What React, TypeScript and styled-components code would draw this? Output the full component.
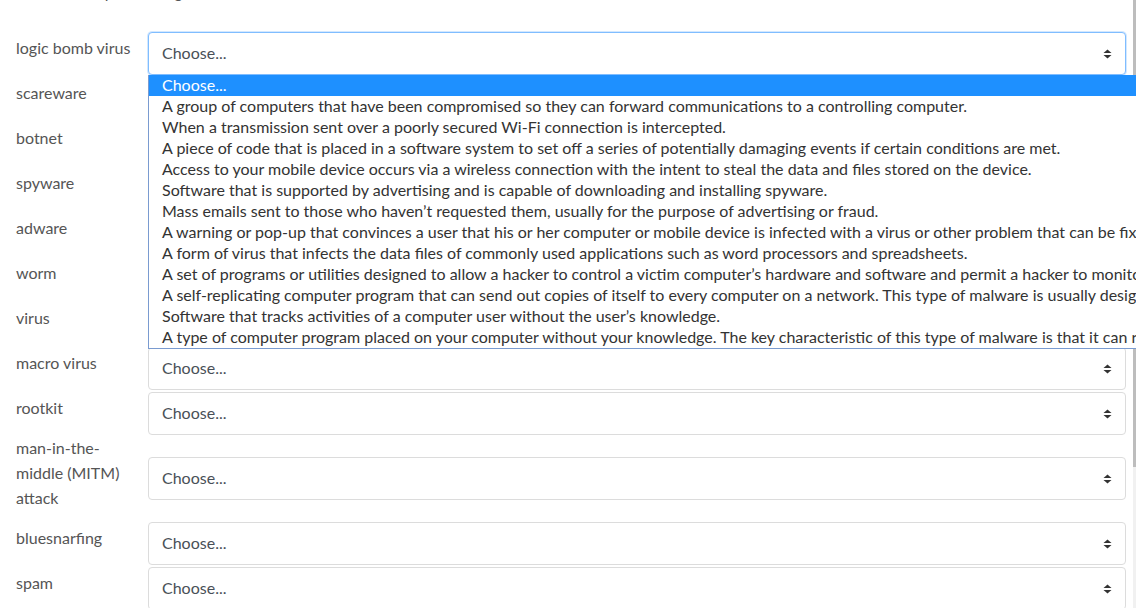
import React from "react";
import styled, { createGlobalStyle } from "styled-components";

const terms = [
  "logic bomb virus",
  "scareware",
  "botnet",
  "spyware",
  "adware",
  "worm",
  "virus",
  "macro virus",
  "rootkit",
  "man-in-the-middle (MITM) attack",
  "bluesnarfing",
  "spam",
];

const definitions = [
  "A group of computers that have been compromised so they can forward communications to a controlling computer.",
  "When a transmission sent over a poorly secured Wi-Fi connection is intercepted.",
  "A piece of code that is placed in a software system to set off a series of potentially damaging events if certain conditions are met.",
  "Access to your mobile device occurs via a wireless connection with the intent to steal the data and files stored on the device.",
  "Software that is supported by advertising and is capable of downloading and installing spyware.",
  "Mass emails sent to those who haven’t requested them, usually for the purpose of advertising or fraud.",
  "A warning or pop-up that convinces a user that his or her computer or mobile device is infected with a virus or other problem that can be fixed by purchasing software.",
  "A form of virus that infects the data files of commonly used applications such as word processors and spreadsheets.",
  "A set of programs or utilities designed to allow a hacker to control a victim computer’s hardware and software and permit a hacker to monitor activity.",
  "A self-replicating computer program that can send out copies of itself to every computer on a network. This type of malware is usually designed to consume bandwidth.",
  "Software that tracks activities of a computer user without the user’s knowledge.",
  "A type of computer program placed on your computer without your knowledge. The key characteristic of this type of malware is that it can replicate itself.",
];

const GlobalStyle = createGlobalStyle`
  html, body {
    margin: 0;
    padding: 0;
    overflow: hidden;
    background: #fff;
    font-family: "Lato", "Liberation Sans", sans-serif;
  }
`;

export default function App() {
  return (
    <Page>
      <GlobalStyle />
      <Intro>In each row, pick the right definition.</Intro>
      <Form>
        {terms.map((term, i) => (
          <Row key={term}>
            <Label>{term}</Label>
            <Field>
              <Select focused={i === 0}>
                <span>Choose...</span>
                <SortIcon />
              </Select>
              {i === 0 && (
                <Listbox>
                  <Option selected>Choose...</Option>
                  {definitions.map((d) => (
                    <Option key={d}>{d}</Option>
                  ))}
                </Listbox>
              )}
            </Field>
          </Row>
        ))}
      </Form>
      <Scrollbar>
        <Thumb />
      </Scrollbar>
    </Page>
  );
}

function SortIcon() {
  return (
    <Icon width="9" height="10" viewBox="0 0 9 10">
      <path d="M4.5 0.5 L8.5 4 L0.5 4 Z" fill="#333" />
      <path d="M0.5 6 L8.5 6 L4.5 9.5 Z" fill="#333" />
    </Icon>
  );
}

const Page = styled.div`
  position: relative;
  width: 1136px;
  height: 608px;
  overflow: hidden;
`;

const Intro = styled.p`
  margin: -19px 0 0 16px;
  height: 22px;
  font-size: 16px;
  line-height: 22px;
  color: #555;
`;

const Form = styled.div`
  display: flex;
  flex-direction: column;
  padding-top: 29px;
`;

const Row = styled.div`
  display: flex;
  align-items: center;
  margin-bottom: 2px;
`;

const Label = styled.div`
  box-sizing: border-box;
  width: 148px;
  flex: none;
  margin-top: -2px;
  padding: 0 14px 10px 16px;
  font-size: 16px;
  line-height: 25px;
  color: #555;
`;

const Field = styled.div`
  position: relative;
  flex: 1;
  margin-right: 10px;
`;

const Select = styled.div<{ focused?: boolean }>`
  box-sizing: border-box;
  height: 43px;
  display: flex;
  align-items: center;
  justify-content: space-between;
  padding: 0 13px 3px 13px;
  border: 1px solid ${(p) => (p.focused ? "#80bdff" : "#dcdcdc")};
  border-radius: 4px;
  box-shadow: ${(p) => (p.focused ? "0 0 0 1px rgba(128, 189, 255, 0.35)" : "none")};
  font-size: 16px;
  color: #495057;
  background: #fff;
`;

const Icon = styled.svg`
  display: block;
  margin-top: 3px;
`;

const Listbox = styled.div`
  position: absolute;
  top: 43px;
  left: 0;
  width: 1400px;
  z-index: 3;
  background: #fff;
  border: 1px solid #7a9bd0;
  border-top: none;
`;

const Option = styled.div<{ selected?: boolean }>`
  height: 21px;
  line-height: 19px;
  padding-left: 13px;
  font-size: 16px;
  white-space: nowrap;
  color: ${(p) => (p.selected ? "#fff" : "#333")};
  background: ${(p) => (p.selected ? "#1e90ff" : "#fff")};
`;

const Scrollbar = styled.div`
  position: absolute;
  top: 0;
  right: 0;
  width: 3px;
  height: 608px;
  background: #f1f1f1;
  z-index: 1;
`;

const Thumb = styled.div`
  height: 467px;
  background: #bdbdbd;
`;
